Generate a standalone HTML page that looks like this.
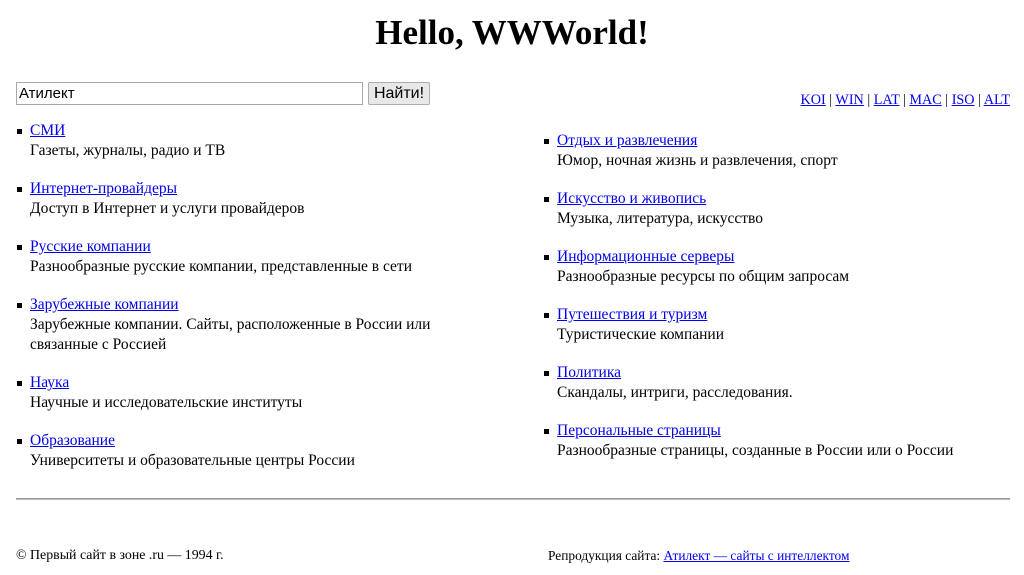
<!DOCTYPE html>
<html><head><meta charset="utf-8"><style>
body{margin:0;width:1024px;height:575px;background:#fff;font-family:"Liberation Serif",serif;color:#000;position:relative;overflow:hidden}
a{color:#0000ee}
h1{position:absolute;left:0;width:1024px;top:13px;margin:0;text-align:center;font-size:35px;font-weight:bold;line-height:40px}
.inp{position:absolute;left:16px;top:82px;font-family:"Liberation Sans",sans-serif;font-size:15px;line-height:21px;padding-left:2px;border:1px solid #a9a9a9;box-sizing:border-box;width:347px;height:23px}
.btn{position:absolute;left:368px;top:82px;width:62px;height:23px;box-sizing:border-box;border:1px solid #adadad;background:#e8e8e8;border-radius:2px;font-family:"Liberation Sans",sans-serif;font-size:16px;text-align:center;line-height:21px}
.it{position:absolute;font-size:15.5px;line-height:20px;white-space:nowrap}
.it:before{content:"";position:absolute;left:-13px;top:8px;width:5px;height:5px;background:#000}
.lang{position:absolute;right:14px;top:92px;font-size:14.2px}
hr{position:absolute;left:16px;top:498px;width:994px;margin:0;border:0;border-top:1px solid #999;border-bottom:1px solid #bbb;height:0}
.f{position:absolute;top:548px;line-height:16px;white-space:nowrap}
</style></head><body>
<h1>Hello, WWWorld!</h1>
<div class="inp">Атилект</div>
<div class="btn">Найти!</div>
<div class="lang"><a href="#">KOI</a> | <a href="#">WIN</a> | <a href="#">LAT</a> | <a href="#">MAC</a> | <a href="#">ISO</a> | <a href="#">ALT</a></div>

<div class="it" style="left:30px;top:121px"><a href="#">СМИ</a><br>Газеты, журналы, радио и ТВ</div>
<div class="it" style="left:30px;top:179px"><a href="#">Интернет-провайдеры</a><br>Доступ в Интернет и услуги провайдеров</div>
<div class="it" style="left:30px;top:237px"><a href="#">Русские компании</a><br>Разнообразные русские компании, представленные в сети</div>
<div class="it" style="left:30px;top:295px"><a href="#">Зарубежные компании</a><br>Зарубежные компании. Сайты, расположенные в России или<br>связанные с Россией</div>
<div class="it" style="left:30px;top:373px"><a href="#">Наука</a><br>Научные и исследовательские институты</div>
<div class="it" style="left:30px;top:431px"><a href="#">Образование</a><br>Университеты и образовательные центры России</div>

<div class="it" style="left:557px;top:131px"><a href="#">Отдых и развлечения</a><br>Юмор, ночная жизнь и развлечения, спорт</div>
<div class="it" style="left:557px;top:189px"><a href="#">Искусство и живопись</a><br>Музыка, литература, искусство</div>
<div class="it" style="left:557px;top:247px"><a href="#">Информационные серверы</a><br>Разнообразные ресурсы по общим запросам</div>
<div class="it" style="left:557px;top:305px"><a href="#">Путешествия и туризм</a><br>Туристические компании</div>
<div class="it" style="left:557px;top:363px"><a href="#">Политика</a><br>Скандалы, интриги, расследования.</div>
<div class="it" style="left:557px;top:421px"><a href="#">Персональные страницы</a><br>Разнообразные страницы, созданные в России или о России</div>

<hr>
<div class="f" style="left:16px;font-size:13.9px">© Первый сайт в зоне .ru — 1994 г.</div>
<div class="f" style="left:548px;font-size:13.4px">Репродукция сайта: <a href="#">Атилект — сайты с интеллектом</a></div>
</body></html>
